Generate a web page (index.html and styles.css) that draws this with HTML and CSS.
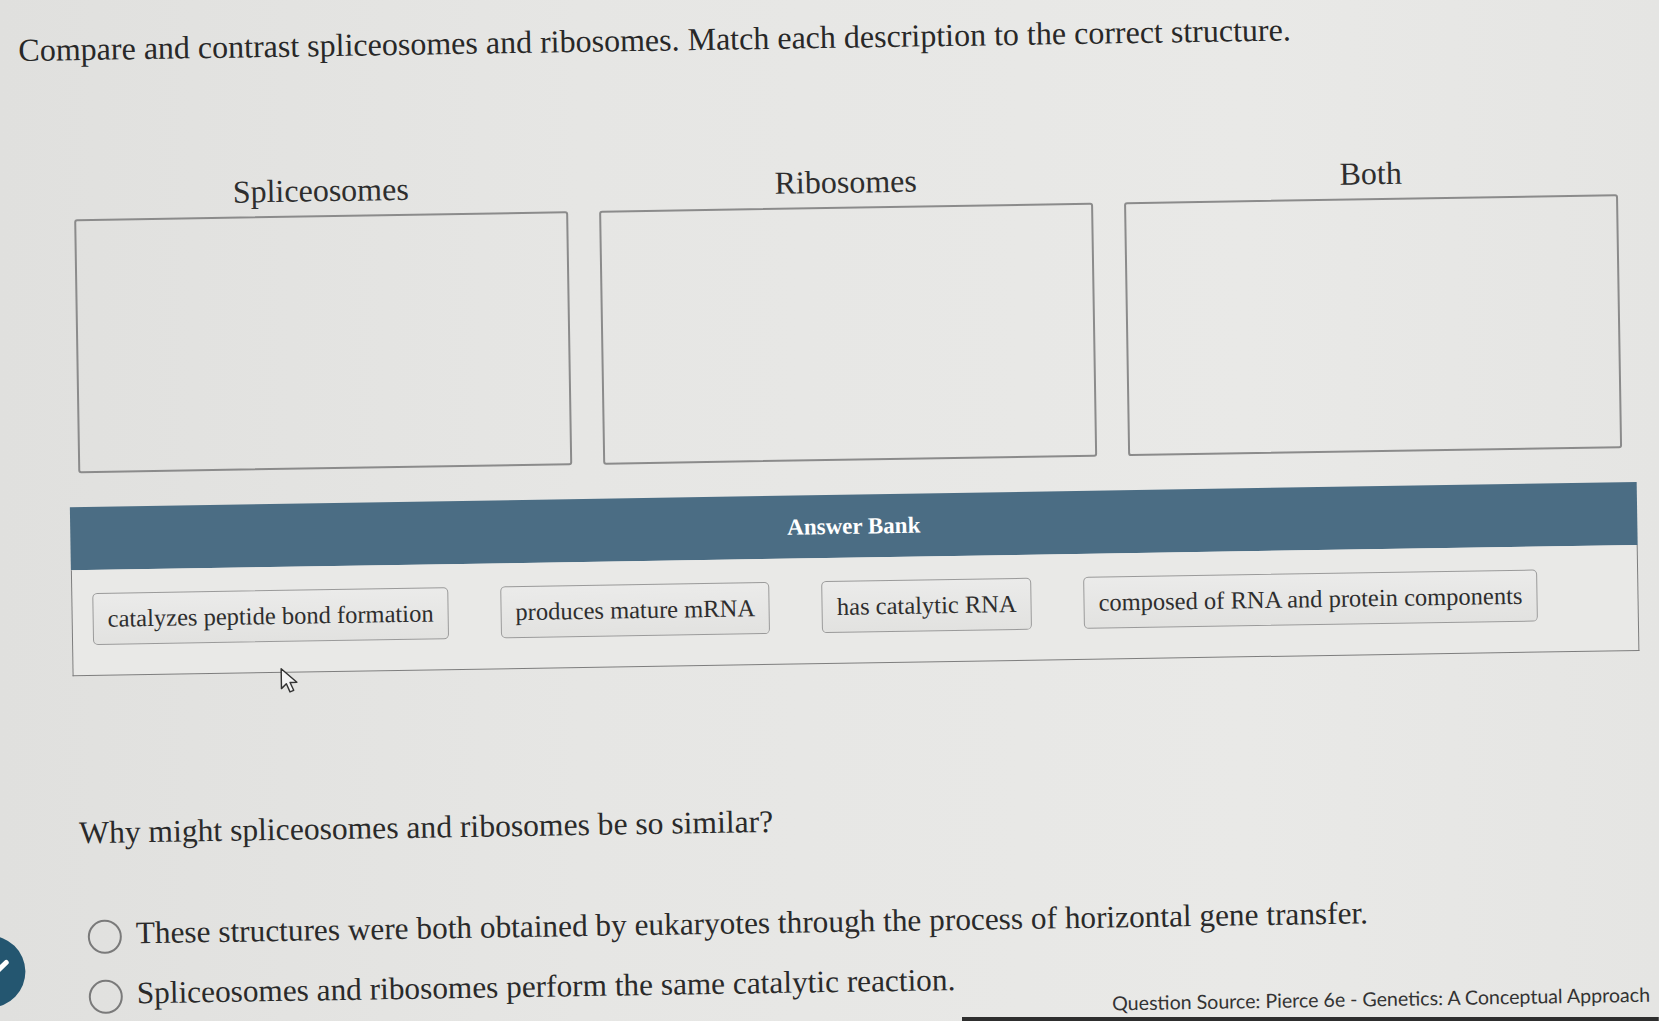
FILE: index.html
```html
<!DOCTYPE html>
<html lang="en">
<head>
<meta charset="utf-8">
<title>Spliceosomes and ribosomes</title>
<link rel="stylesheet" href="styles.css">
</head>
<body>
<div class="page">
  <h1 class="title">Compare and contrast spliceosomes and ribosomes. Match each description to the correct structure.</h1>

  <div class="targets">
    <div class="target">
      <div class="target-label">Spliceosomes</div>
      <div class="drop"></div>
    </div>
    <div class="target">
      <div class="target-label">Ribosomes</div>
      <div class="drop"></div>
    </div>
    <div class="target">
      <div class="target-label">Both</div>
      <div class="drop"></div>
    </div>
  </div>

  <section class="bank">
    <div class="bank-head">Answer Bank</div>
    <div class="bank-body">
      <div class="chip">catalyzes peptide bond formation</div>
      <div class="chip">produces mature mRNA</div>
      <div class="chip">has catalytic RNA</div>
      <div class="chip">composed of RNA and protein components</div>
    </div>
  </section>

  <p class="question">Why might spliceosomes and ribosomes be so similar?</p>

  <ul class="options">
    <li class="option"><span class="radio"></span><span class="option-text">These structures were both obtained by eukaryotes through the process of horizontal gene transfer.</span></li>
    <li class="option"><span class="radio"></span><span class="option-text">Spliceosomes and ribosomes perform the same catalytic reaction.</span></li>
  </ul>

  <div class="source">Question Source: Pierce 6e - Genetics: A Conceptual Approach</div>

  <svg class="cursor" width="22" height="28" viewBox="0 0 20 25" aria-hidden="true">
    <path d="M1.5 1.5 L1.5 19.5 L6 15.2 L9.2 22.6 L12.6 21.2 L9.4 14 L15.6 14 Z" fill="#f4f4f4" stroke="#333333" stroke-width="1.3" stroke-linejoin="round"/>
  </svg>

  <div class="badge">
    <svg width="72" height="72" viewBox="0 0 72 72" aria-hidden="true">
      <path d="M22 37 L32 47 L53 27" fill="none" stroke="#ffffff" stroke-width="5" stroke-linecap="round" stroke-linejoin="round"/>
    </svg>
  </div>
</div>
</body>
</html>
```

FILE: styles.css
```css
html {
  margin: 0;
  height: 100%;
  overflow: hidden;
  background-color: #e6e6e4;
  background-image:
    linear-gradient(#2e2e2e, #2e2e2e),
    linear-gradient(90deg, #e0e0de 0%, #e6e6e4 35%, #e9e9e7 75%, #e5e5e3 100%);
  background-repeat: no-repeat, no-repeat;
  background-position: right bottom, 0 0;
  background-size: 42% 4px, 100% 100%;
}

body {
  margin: 0;
  height: 1021px;
  overflow: hidden;
  font-family: "Liberation Serif", "Times New Roman", serif;
  color: #2a2a2a;
}

.page {
  position: relative;
  width: 1659px;
  height: 1021px;
  box-sizing: border-box;
  padding: 19px 17px 0 26px;
  transform: rotate(-0.93deg);
  transform-origin: 830px 510px;
}

.title {
  margin: 0;
  font-weight: normal;
  font-size: 32px;
  line-height: 37px;
  white-space: nowrap;
  color: #282828;
}

.targets {
  display: grid;
  grid-template-columns: repeat(3, 494px);
  column-gap: 31px;
  margin: 108px 0 0 53px;
}

.target-label {
  text-align: center;
  font-size: 32px;
  line-height: 37px;
  margin-bottom: 6px;
  color: #2e2e2e;
}

.drop {
  height: 254px;
  box-sizing: border-box;
  border: 2px solid #8b8b8b;
  border-radius: 3px;
}

.bank {
  margin: 34px 0 0 44px;
  width: 1567px;
}

.bank-head {
  height: 63px;
  background: #4b6d84;
  color: #ffffff;
  font-weight: bold;
  font-size: 23px;
  display: flex;
  align-items: center;
  justify-content: center;
}

.bank-body {
  height: 106px;
  box-sizing: border-box;
  border: 1.5px solid #7d7d7d;
  border-top: none;
  padding: 23px 20px 0;
  display: flex;
  align-items: flex-start;
  gap: 52px;
  background: #e9e9e7;
}

.chip {
  height: 52px;
  box-sizing: border-box;
  border: 1.5px solid #9a9a9a;
  border-radius: 5px;
  padding: 0 14px;
  font-size: 24.5px;
  display: flex;
  align-items: center;
  white-space: nowrap;
  color: #2e2e2e;
  background: linear-gradient(#ebebea, #e2e2e0);
}

.question {
  margin: 138px 0 0 48px;
  font-size: 31.6px;
  line-height: 37px;
  color: #2a2a2a;
}

.options {
  list-style: none;
  margin: 61px 0 0 55px;
  padding: 0;
}

.option {
  display: flex;
  align-items: center;
  gap: 14px;
  font-size: 31.3px;
  line-height: 37px;
  white-space: nowrap;
}

.option + .option {
  margin-top: 18px;
}

.radio {
  flex: none;
  width: 34px;
  height: 34px;
  margin-top: 8px;
  box-sizing: border-box;
  border: 2px solid #7a7a7a;
  border-radius: 50%;
}

.source {
  margin-top: -5px;
  text-align: right;
  font-family: Lato, "Open Sans", sans-serif;
  font-size: 19.6px;
  line-height: 22px;
  color: #333333;
}

.cursor {
  position: absolute;
  left: 277px;
  top: 658px;
}

.badge {
  position: absolute;
  left: -54px;
  top: 922px;
  width: 72px;
  height: 72px;
  border-radius: 50%;
  background: #245670;
}

.badge svg {
  display: block;
}
```
